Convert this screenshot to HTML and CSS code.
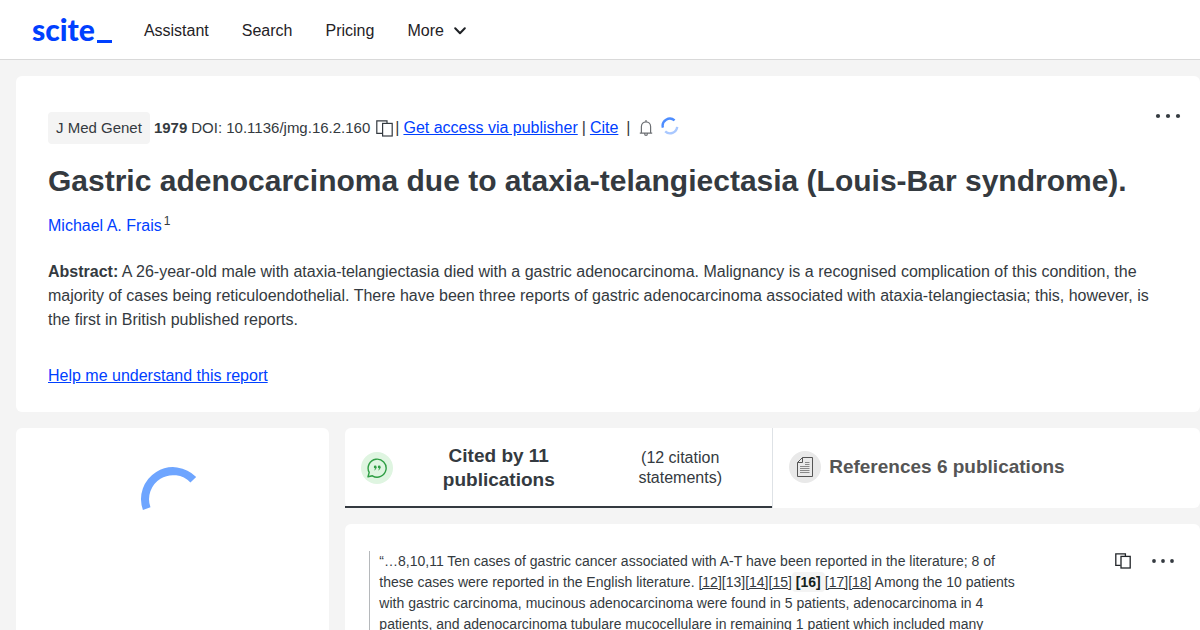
FILE: index.html
```html
<!DOCTYPE html>
<html lang="en">
<head>
    <meta charset="UTF-8">
    <meta name="viewport" content="width=device-width, initial-scale=1.0">
    <title>Gastric adenocarcinoma due to ataxia-telangiectasia (Louis-Bar syndrome). - scite</title>
    <link rel="stylesheet" href="styles.css">
</head>
<body>
    <header class="navbar">
        <a class="logo" href="#">scite<span class="logo-bar"></span></a>
        <nav class="nav-links">
            <a href="#">Assistant</a>
            <a href="#">Search</a>
            <a href="#">Pricing</a>
            <button class="more-button" type="button">
                More
                <svg width="12" height="8" viewBox="0 0 12 8" fill="none" stroke="#1f2226" stroke-width="2" stroke-linecap="round" stroke-linejoin="round"><path d="M1.2 1.3L6 6.3L10.8 1.3"/></svg>
            </button>
        </nav>
    </header>

    <main class="page">
        <section class="card paper">
            <div class="paper-top">
                <div class="paper-meta">
                    <span class="journal">J Med Genet</span>
                    <strong class="year">1979</strong>
                    <span class="doi">DOI: 10.1136/jmg.16.2.160</span>
                    <span class="copy-doi">
                        <button class="icon-button" type="button" aria-label="Copy DOI">
                            <svg width="17" height="17" viewBox="0 0 17 17" fill="none" stroke="#343a40" stroke-width="1.2"><path d="M6.4 13.4H.8V.8H11V3"/><rect x="6.6" y="3.4" width="9.6" height="12.6"/></svg>
                        </button>
                        |
                    </span>
                    <a class="link" href="#">Get access via publisher</a>
                    <span>|</span>
                    <a class="link" href="#">Cite</a>
                    <span class="last">|</span>
                    <button class="icon-button bell" type="button" aria-label="Notify me">
                        <svg width="14" height="18" viewBox="0 0 14 18" fill="none" stroke="#6c6f73" stroke-width="1.2"><path d="M.8 14.2H13.2M2.4 14V7.6C2.4 4.8 4.4 2.8 7 2.8S11.6 4.8 11.6 7.6V14M7 2.8V1M5.6 14.4C5.6 17 8.4 17 8.4 14.4"/></svg>
                    </button>
                    <svg class="spinner-small" width="18" height="18" viewBox="0 0 18 18" fill="none" stroke-width="2.4"><path d="M1.9 10.6A7.2 7.2 0 0 1 13.6 3.4" stroke="#4d8dff"/><path d="M4.2 14.4A7.2 7.2 0 0 0 16.2 9.8" stroke="#a9c8ff"/></svg>
                </div>
                <button class="icon-button" type="button" aria-label="More options">
                    <svg width="26" height="8" viewBox="0 0 26 8" fill="#343a40"><circle cx="3" cy="4" r="2.1"/><circle cx="13" cy="4" r="2.1"/><circle cx="23" cy="4" r="2.1"/></svg>
                </button>
            </div>
            <div class="paper-body">
                <h1>Gastric adenocarcinoma due to ataxia-telangiectasia (Louis-Bar syndrome).</h1>
                <p class="authors"><a href="#">Michael A. Frais</a><sup>1</sup></p>
                <p class="abstract"><strong>Abstract:</strong> A 26-year-old male with ataxia-telangiectasia died with a gastric adenocarcinoma. Malignancy is a recognised complication of this condition, the majority of cases being reticuloendothelial. There have been three reports of gastric adenocarcinoma associated with ataxia-telangiectasia; this, however, is the first in British published reports.</p>
                <a class="link" href="#">Help me understand this report</a>
            </div>
        </section>

        <div class="columns">
            <aside class="card sidebar">
                <svg width="64" height="64" viewBox="0 0 64 64" fill="none" stroke="#6ea5ff" stroke-width="8"><path d="M5.7 41.6A28 28 0 0 1 52.3 12.8"/></svg>
            </aside>
            <div class="main-column">
                <div class="card tabs">
                    <button class="tab active" type="button">
                        <span class="tab-icon green">
                            <svg width="20" height="20" viewBox="0 0 20 20" fill="none" stroke="#2f9e44" stroke-width="1.4"><path d="M2.2 14.4A9 9 0 1 1 5.4 17.8L1 18.8Z" stroke-linejoin="round"/><g fill="#2f9e44" stroke="none"><circle cx="8.2" cy="9" r="1.4"/><path d="M9.6 9Q9.6 11.6 7.4 12.6L7.2 12Q8.4 11.2 8.4 9.6Z"/><circle cx="12.2" cy="9" r="1.4"/><path d="M13.6 9Q13.6 11.6 11.4 12.6L11.2 12Q12.4 11.2 12.4 9.6Z"/></g></svg>
                        </span>
                        <span class="tab-title">Cited by 11 publications</span>
                        <span class="tab-note">(12 citation statements)</span>
                    </button>
                    <button class="tab references" type="button">
                        <span class="tab-icon gray">
                            <svg width="16" height="20" viewBox="0 0 16 20" fill="none" stroke="#555"><path d="M5.5 .5H15.5V19.5H.5V5.5ZM5.5 .5V5.5H.5"/><path d="M8 5.5H12.5M8 7.5H12.5M3 9.5H12.5M3 11.5H12.5M3 13.5H12.5M3 15.5H12.5" stroke="#888"/></svg>
                        </span>
                        <span class="tab-title">References 6 publications</span>
                    </button>
                </div>

                <article class="card citation">
                    <blockquote>“…8,10,11 Ten cases of gastric cancer associated with A-T have been reported in the literature; 8 of these cases were reported in the English literature. <a href="#">[12]</a>[13]<a href="#">[14]</a><a href="#">[15]</a><strong class="current">[16]</strong><a href="#">[17]</a><a href="#">[18]</a> Among the 10 patients with gastric carcinoma, mucinous adenocarcinoma were found in 5 patients, adenocarcinoma in 4 patients, and adenocarcinoma tubulare mucocellulare in remaining 1 patient which included many</blockquote>
                    <div class="citation-actions">
                        <button class="icon-button" type="button" aria-label="Copy citation">
                            <svg width="16" height="16" viewBox="0 0 16 16" fill="none" stroke="#212529" stroke-width="1.3"><path d="M5.6 12.4H.8V.8H10.4V3"/><rect x="6" y="3.4" width="9.2" height="11.6"/></svg>
                        </button>
                        <button class="icon-button" type="button" aria-label="More options">
                            <svg width="24" height="8" viewBox="0 0 24 8" fill="#343a40"><circle cx="3" cy="4" r="1.9"/><circle cx="12" cy="4" r="1.9"/><circle cx="21" cy="4" r="1.9"/></svg>
                        </button>
                    </div>
                </article>
            </div>
        </div>
    </main>
</body>
</html>
```
FILE: styles.css
```css
* {
    box-sizing: border-box;
}

body {
    margin: 0;
    background-color: #f4f4f4;
    color: #343a40;
    font-family: "Liberation Sans", Arial, sans-serif;
    font-size: 16px;
    line-height: 24px;
}

h1, p, blockquote {
    margin: 0;
}

button {
    padding: 0;
    border: none;
    background: none;
    color: inherit;
    font: inherit;
    cursor: pointer;
}

svg {
    display: block;
    flex: none;
}

.navbar {
    display: flex;
    align-items: center;
    gap: 32px;
    height: 60px;
    padding: 0 32px;
    background-color: white;
    border-bottom: 1px solid #d9d9d9;
}

.logo {
    display: flex;
    align-items: flex-end;
    gap: 2px;
    padding-bottom: 2px;
    color: #0040ff;
    font-family: Lato, sans-serif;
    font-size: 30px;
    font-weight: 900;
    line-height: 24px;
    text-decoration: none;
}

.logo-bar {
    width: 15px;
    height: 3px;
    margin-bottom: -2px;
    background-color: #0040ff;
}

.nav-links {
    display: flex;
    gap: 33px;
    padding-top: 2px;
    color: #1f2226;
}

.nav-links a {
    color: inherit;
    text-decoration: none;
}

.more-button {
    display: flex;
    align-items: center;
    gap: 10px;
}

.page {
    display: flex;
    flex-direction: column;
    gap: 16px;
    padding: 16px 0 0 16px;
}

.card {
    background-color: white;
    border-radius: 6px;
}

.paper {
    padding: 36px 0 24px 32px;
}

.paper-top {
    display: flex;
    justify-content: space-between;
    align-items: flex-start;
    padding-right: 19px;
}

.paper-meta {
    display: flex;
    align-items: center;
    gap: 4px;
}

.journal {
    padding: 4px 8px;
    background-color: #f4f4f4;
    border-radius: 4px;
}

.journal,
.year,
.doi {
    font-size: 15px;
}

.icon-button {
    display: block;
}

.copy-doi {
    display: flex;
    align-items: center;
    gap: 2px;
    padding-left: 2px;
}

.last {
    margin-left: 4px;
}

.bell {
    margin: 0 4px;
}

.spinner-small {
    margin-bottom: 4px;
}

.link {
    color: #0040ff;
    text-decoration: underline;
}

.paper-body {
    padding-right: 48px;
}

h1 {
    margin-top: 17px;
    font-size: 30px;
    font-weight: bold;
    line-height: 40px;
}

.authors {
    margin-top: 13px;
}

.authors a {
    color: #0040ff;
    text-decoration: none;
}

sup {
    margin-left: 2px;
    font-size: 12px;
    line-height: 0;
}

.abstract {
    margin: 22px 0 32px;
}

.columns {
    display: flex;
    gap: 16px;
}

.sidebar {
    display: flex;
    justify-content: center;
    align-items: flex-start;
    flex: 11;
    padding-top: 39px;
}

.main-column {
    display: flex;
    flex-direction: column;
    flex: 30;
    gap: 16px;
    min-width: 0;
}

.tabs {
    display: flex;
    height: 80px;
}

.tab {
    display: flex;
    align-items: center;
    flex: 1;
    padding: 0 16px;
}

.active {
    box-shadow: inset 0 -2px #343a40;
}

.references {
    gap: 8px;
    padding-bottom: 2px;
    border-left: 1px solid #dee2e6;
    color: #555;
}

.tab-icon {
    display: flex;
    justify-content: center;
    align-items: center;
    flex: none;
    width: 32px;
    height: 32px;
    border-radius: 50%;
}

.green {
    background-color: #dff5e1;
}

.gray {
    background-color: #e9e9e9;
}

.tab-title {
    font-size: 19px;
    font-weight: bold;
}

.active .tab-title {
    flex: 1;
    padding: 0 40px;
}

.tab-note {
    width: 152px;
    padding: 0 24px;
    line-height: 20px;
}

.citation {
    display: flex;
    justify-content: space-between;
    align-items: flex-start;
    padding: 27px 25px 24px 24px;
}

blockquote {
    max-width: 656px;
    padding-left: 9px;
    border-left: 1px solid #b5b8bb;
    font-size: 14px;
    line-height: 21px;
}

blockquote a {
    color: inherit;
}

.current {
    padding: 2px 4px;
    background-color: #f4f4f4;
    border-radius: 4px;
    color: #14211b;
}

.citation-actions {
    display: flex;
    align-items: center;
    gap: 20px;
    padding-top: 2px;
}
```
